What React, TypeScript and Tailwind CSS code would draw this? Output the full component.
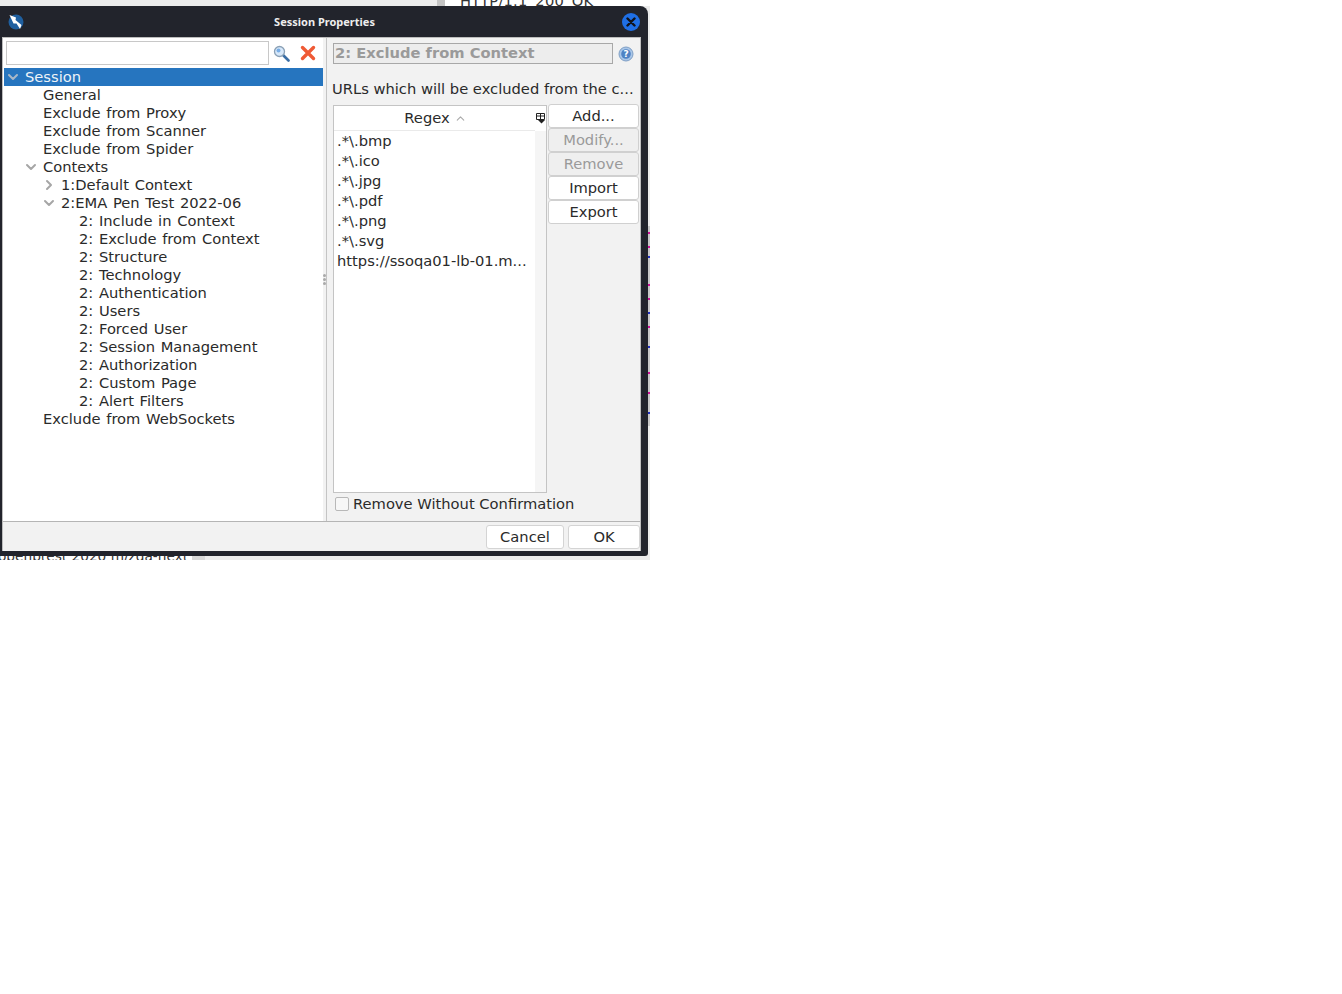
import { ChevronDown, ChevronRight, ChevronUp } from 'lucide-react';

type Node = { label: string; indent: number; arrow?: 'down' | 'right'; selected?: boolean };

const tree: Node[] = [
  { label: 'Session', indent: 25, arrow: 'down', selected: true },
  { label: 'General', indent: 43 },
  { label: 'Exclude from Proxy', indent: 43 },
  { label: 'Exclude from Scanner', indent: 43 },
  { label: 'Exclude from Spider', indent: 43 },
  { label: 'Contexts', indent: 43, arrow: 'down' },
  { label: '1:Default Context', indent: 61, arrow: 'right' },
  { label: '2:EMA Pen Test 2022-06', indent: 61, arrow: 'down' },
  { label: '2: Include in Context', indent: 79 },
  { label: '2: Exclude from Context', indent: 79 },
  { label: '2: Structure', indent: 79 },
  { label: '2: Technology', indent: 79 },
  { label: '2: Authentication', indent: 79 },
  { label: '2: Users', indent: 79 },
  { label: '2: Forced User', indent: 79 },
  { label: '2: Session Management', indent: 79 },
  { label: '2: Authorization', indent: 79 },
  { label: '2: Custom Page', indent: 79 },
  { label: '2: Alert Filters', indent: 79 },
  { label: 'Exclude from WebSockets', indent: 43 },
];

const regexes = ['.*\\.bmp', '.*\\.ico', '.*\\.jpg', '.*\\.pdf', '.*\\.png', '.*\\.svg', 'https://ssoqa01-lb-01.m...'];

// coloured specks of the window behind, seen along the dialog's right edge
const specks = [
  { top: 232, color: '#d0109a' }, { top: 246, color: '#d0109a' }, { top: 256, color: '#2030c0' },
  { top: 284, color: '#d0109a' }, { top: 298, color: '#d0109a' }, { top: 312, color: '#2030c0' },
  { top: 326, color: '#d0109a' }, { top: 346, color: '#2030c0' }, { top: 372, color: '#d0109a' },
  { top: 392, color: '#d0109a' }, { top: 412, color: '#2030c0' },
];

function TreeRow({ node }: { node: Node }) {
  const Icon = node.arrow === 'right' ? ChevronRight : ChevronDown;
  return (
    <div
      className={`relative h-[18px] leading-[18px] whitespace-nowrap ${node.selected ? 'bg-[#2675bf] text-[#eef3f8]' : 'text-[#2a2a2a]'}`}
      style={{ paddingLeft: node.indent - 4 }}
    >
      {node.arrow && (
        <Icon
          size={16}
          strokeWidth={3}
          className={`absolute top-[1px] ${node.selected ? 'text-[#a9b8c8]' : 'text-[#a6a6a6]'}`}
          style={{ left: node.indent - 24 }}
        />
      )}
      {node.label}
    </div>
  );
}

function SideButton({ label, disabled }: { label: string; disabled?: boolean }) {
  return (
    <button
      type="button"
      className={`h-6 w-[91px] rounded-[3px] border border-[#d0d0d0] text-center leading-[20px] ${disabled ? 'bg-[#efefef] text-[#9a9a9a]' : 'bg-white text-[#2a2a2a]'}`}
    >
      {label}
    </button>
  );
}

function AppLogo() {
  return (
    <svg width="16" height="16" viewBox="0 0 16 16">
      <circle cx="8" cy="8" r="7.5" fill="#1f5f9f" />
      <path d="M1.5 1 L8 3.5 L7.5 6 L13.5 11 L12 15 L8.5 9.5 L5.5 9.5 Z" fill="#fff" />
    </svg>
  );
}

function SearchIcon() {
  return (
    <svg width="17" height="17" viewBox="0 0 17 17">
      <path d="M10 10 L15.5 15.5" stroke="#3a6ea5" strokeWidth="2.6" strokeLinecap="round" />
      <circle cx="6.5" cy="6.5" r="5" fill="#d7e8fa" stroke="#8aa0b5" strokeWidth="1.3" />
      <circle cx="5.5" cy="5.5" r="2" fill="#79aee6" />
    </svg>
  );
}

function CrossIcon() {
  return (
    <svg width="16" height="16" viewBox="0 0 16 16">
      <path d="M2.5 2.5 L13.5 13.5 M13.5 2.5 L2.5 13.5" stroke="#ef5a35" strokeWidth="3.4" strokeLinecap="round" />
    </svg>
  );
}

function HelpIcon() {
  return (
    <svg width="16" height="16" viewBox="0 0 16 16">
      <circle cx="8" cy="8" r="7" fill="#a9c6e8" stroke="#7f9fc5" />
      <circle cx="8" cy="8" r="4.8" fill="#4f83c4" />
      <text x="8" y="11" textAnchor="middle" fontSize="9" fontWeight="700" fill="#fff" fontFamily="'DejaVu Sans', sans-serif">?</text>
    </svg>
  );
}

function ColumnIcon() {
  return (
    <svg width="10" height="11" viewBox="0 0 10 11">
      <path d="M0.5 0.5 H8.5 V6.5 H0.5 Z M0.5 3 H8.5 M4.5 0.5 V6.5" fill="none" stroke="#222" />
      <path d="M2 7 H9 L5.5 10.5 Z" fill="#222" />
    </svg>
  );
}

export default function App() {
  return (
    <div className="relative h-[994px] w-[1342px] overflow-hidden bg-white font-['DejaVu_Sans',sans-serif] text-[14.7px] [word-spacing:1px]">
      {/* what shows behind the dialog */}
      <div className="relative h-[560px] w-[650px] overflow-hidden bg-[#ececec]">
        <div className="absolute left-[437px] top-0 h-[6px] w-[8px] bg-[#c4c4c4]" />
        <div className="absolute left-[445px] top-0 h-[6px] w-[205px] bg-white" />
        <div className="absolute left-[460px] top-[-6px] text-[14.7px] leading-[14px] tracking-[0.2px] text-[#333] [word-spacing:3px]">HTTP/1.1 200 OK</div>
        <div className="absolute left-0 top-[550px] h-[10px] w-[650px] bg-white" />
        <div className="absolute left-[205px] top-[550px] h-[10px] w-[445px] bg-[#ececec]" />
        <div className="absolute left-[192px] top-[550px] h-[10px] w-[13px] bg-[#d8d8d8]" />
        <div className="absolute left-[-2px] top-[549px] text-[13.7px] leading-[14px] text-[#333] [word-spacing:0px]">openbtest 2020 m/zda-next</div>
        <div className="absolute left-[648px] top-[226px] h-[200px] w-[2px] bg-[#c8c8c8]" />
        {specks.map((s) => (
          <div key={s.top} className="absolute left-[648px] h-[2px] w-[2px]" style={{ top: s.top, backgroundColor: s.color }} />
        ))}

        {/* dialog window */}
        <div className="absolute left-0 top-[6px] flex h-[550px] w-[648px] flex-col rounded-tr-[8px] rounded-br-[3px] bg-[#22242c] pb-[5px] pl-[2px] pr-[7px]">
          <div className="relative flex h-[31px] shrink-0 items-center justify-center pl-[6px] pt-[1px] font-['Noto_Sans',sans-serif] text-[11px] font-bold text-[#eeeeee] [word-spacing:0px]">
            <span className="absolute left-[6px] top-[8px]"><AppLogo /></span>
            Session Properties
            <span className="absolute right-[1px] top-[7px] flex h-[18px] w-[18px] items-center justify-center rounded-full bg-[#1f6fe5]">
              <svg width="10" height="10" viewBox="0 0 10 10">
                <path d="M1.5 1.5 L8.5 8.5 M8.5 1.5 L1.5 8.5" stroke="#11131a" strokeWidth="2.4" strokeLinecap="round" />
              </svg>
            </span>
          </div>

          <div className="flex min-h-0 flex-1 flex-col border border-b-0 border-[#bdbdbd] bg-[#f2f2f2]">
            <div className="flex min-h-0 flex-1 border-b border-[#b5b5b5]">
              {/* left: search and tree */}
              <div className="flex w-[320px] shrink-0 flex-col bg-white">
                <div className="flex h-[30px] shrink-0 items-center pl-[3px]">
                  <div className="h-[24px] w-[263px] border border-[#c8c8c8] bg-white" />
                  <span className="ml-[4px] flex"><SearchIcon /></span>
                  <span className="ml-[10px] flex"><CrossIcon /></span>
                </div>
                <div className="pl-[1px]">
                  {tree.map((node) => (
                    <TreeRow key={node.label} node={node} />
                  ))}
                </div>
              </div>

              {/* divider */}
              <div className="flex w-[4px] shrink-0 flex-col items-center justify-center gap-[1px] border-r border-[#c4c4c4] bg-[#f2f2f2]">
                <span className="h-[3px] w-[3px] rounded-full bg-[#aaa]" />
                <span className="h-[3px] w-[3px] rounded-full bg-[#aaa]" />
                <span className="h-[3px] w-[3px] rounded-full bg-[#aaa]" />
              </div>

              {/* right: panel */}
              <div className="flex min-w-0 flex-1 flex-col pl-[5px] text-[#2a2a2a]">
                <div className="mt-[5px] flex h-[21px] shrink-0 items-center">
                  <div className="ml-[1px] h-[21px] w-[280px] border border-[#a8a8a8] bg-[#ededed] pl-[1px] text-[14.7px] font-bold leading-[17px] text-[#9a9a9a] [word-spacing:0px]">
                    2: Exclude from Context
                  </div>
                  <span className="ml-[5px] flex"><HelpIcon /></span>
                </div>
                <div className="mt-[15px] h-[20px] shrink-0 whitespace-nowrap leading-[20px] [word-spacing:0px]">URLs which will be excluded from the c...</div>
                <div className="mt-[6px] flex min-h-0 flex-1 items-start">
                  <div className="ml-[1px] flex h-[388px] w-[214px] shrink-0 border border-[#c4c4c4] bg-white">
                    <div className="flex w-[201px] flex-col">
                      <div className="flex h-[25px] items-center justify-center gap-[4px] border-b border-[#eaeaea] pl-[2px]">
                        Regex <ChevronUp size={13} className="text-[#aaa]" />
                      </div>
                      <div className="pl-[3px]">
                        {regexes.map((r) => (
                          <div key={r} className="h-5 whitespace-nowrap leading-5">{r}</div>
                        ))}
                      </div>
                    </div>
                    <div className="flex w-[11px] flex-col items-center bg-[#f5f5f5]">
                      <div className="flex h-[25px] w-full items-center justify-center bg-white pl-[1px]"><ColumnIcon /></div>
                    </div>
                  </div>
                  <div className="-mt-[1px] ml-[1px] flex flex-col">
                    <SideButton label="Add..." />
                    <SideButton label="Modify..." disabled />
                    <SideButton label="Remove" disabled />
                    <SideButton label="Import" />
                    <SideButton label="Export" />
                  </div>
                </div>
                <div className="mb-[7px] flex h-[20px] shrink-0 items-center pl-[3px]">
                  <span className="h-[14px] w-[14px] rounded-[2px] border border-[#b8b8b8] bg-[#f7f7f7]" />
                  <span className="ml-[4px] whitespace-nowrap [word-spacing:0px]">Remove Without Confirmation</span>
                </div>
              </div>
            </div>

            {/* footer buttons */}
            <div className="flex h-[29px] shrink-0 items-center justify-end gap-[4px] pt-[1px] text-[#2a2a2a]">
              <button type="button" className="h-6 w-[78px] rounded-[3px] border border-[#d4d4d4] bg-white text-center leading-[20px]">Cancel</button>
              <button type="button" className="h-6 w-[72px] rounded-[3px] border border-[#d4d4d4] bg-white text-center leading-[20px]">OK</button>
            </div>
          </div>
        </div>
      </div>
    </div>
  );
}
